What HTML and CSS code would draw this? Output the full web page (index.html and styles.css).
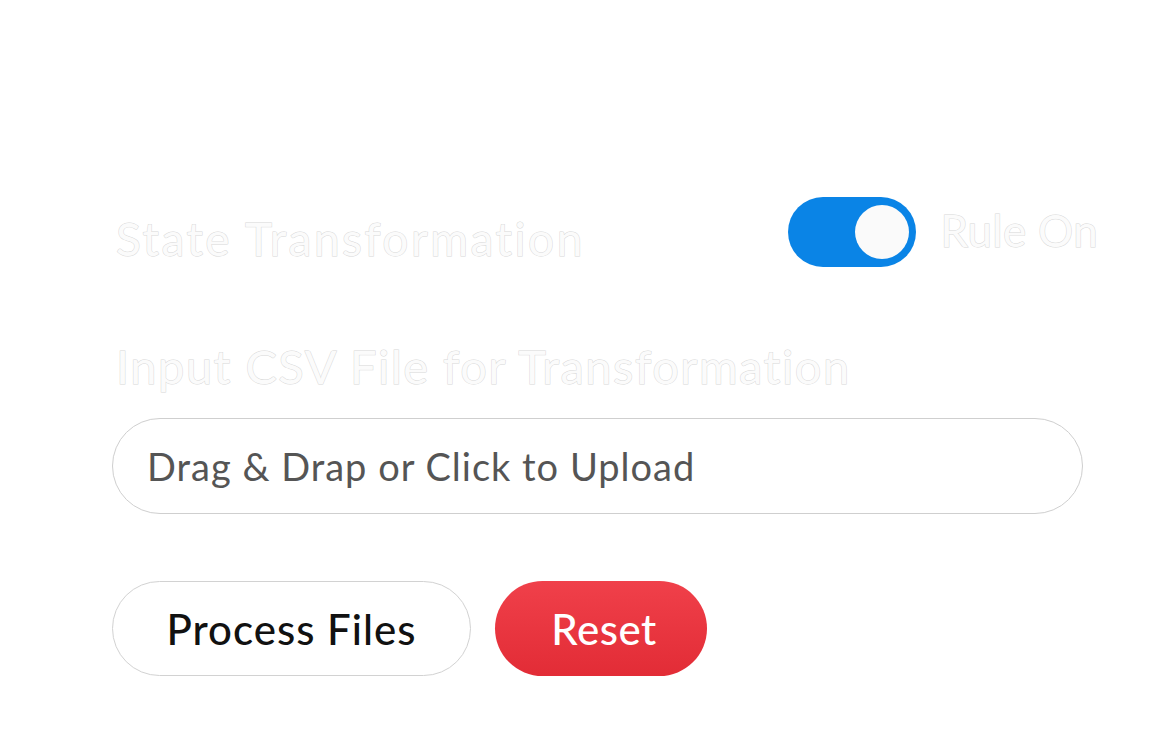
FILE: index.html
```html
<!DOCTYPE html>
<html>
<head>
<meta charset="utf-8">
<link rel="stylesheet" href="styles.css">
</head>
<body>
<main class="panel">
  <div class="header-row">
    <h1 class="ghost title">State Transformation</h1>
    <div class="toggle-group">
      <div class="toggle"><span class="knob"></span></div>
      <span class="ghost toggle-label">Rule On</span>
    </div>
  </div>
  <h2 class="ghost subtitle">Input CSV File for Transformation</h2>
  <div class="dropzone">Drag &amp; Drap or Click to Upload</div>
  <div class="actions">
    <button class="btn btn-light">Process Files</button>
    <button class="btn btn-red">Reset</button>
  </div>
</main>
</body>
</html>
```
FILE: styles.css
```css
html, body {
  margin: 0;
  padding: 0;
  background: #ffffff;
}
body {
  font-family: "Lato", "Noto Sans", sans-serif;
}
.panel {
  padding: 197px 78px 0 112px;
  display: flex;
  flex-direction: column;
}
.header-row {
  display: flex;
  justify-content: space-between;
  align-items: flex-start;
}
.ghost {
  color: #fbfbfb;
  -webkit-text-stroke: 1px #d8d8d8;
  paint-order: stroke fill;
  font-weight: 400;
  margin: 0;
}
.title {
  font-size: 46px;
  line-height: 56px;
  letter-spacing: 2.5px;
  margin: 14px 0 0 4px;
}
.toggle-group {
  display: flex;
  align-items: center;
  gap: 24px;
}
.toggle {
  width: 128px;
  height: 70px;
  border-radius: 35px;
  background: #0a84e6;
  display: flex;
  align-items: center;
  justify-content: flex-end;
  padding-right: 7px;
  box-sizing: border-box;
}
.knob {
  width: 54px;
  height: 54px;
  border-radius: 50%;
  background: #fafafa;
}
.toggle-label {
  font-size: 44px;
  line-height: 56px;
  letter-spacing: 0.3px;
  margin-top: -4px;
}
.subtitle {
  font-size: 47px;
  line-height: 56px;
  letter-spacing: 1.5px;
  margin: 71px 0 0 4px;
}
.dropzone {
  margin-top: 24px;
  width: 971px;
  height: 96px;
  box-sizing: border-box;
  border: 1px solid #cfcfcf;
  border-radius: 48px;
  display: flex;
  align-items: center;
  padding-left: 34px;
  font-size: 38px;
  letter-spacing: 1px;
  color: #555555;
}
.actions {
  margin-top: 67px;
  display: flex;
  gap: 24px;
}
.btn {
  height: 95px;
  border-radius: 48px;
  font-family: "Lato", "Noto Sans", sans-serif;
  font-size: 42px;
  font-weight: 500;
  padding: 0;
  cursor: pointer;
}
.btn-light {
  width: 359px;
  background: #ffffff;
  border: 1px solid #d2d2d2;
  color: #111111;
  letter-spacing: 1px;
}
.btn-red {
  width: 212px;
  background: linear-gradient(180deg, #f0404a 0%, #e22c36 100%);
  border: none;
  color: #ffffff;
  letter-spacing: 0.5px;
  padding-left: 6px;
}
```
